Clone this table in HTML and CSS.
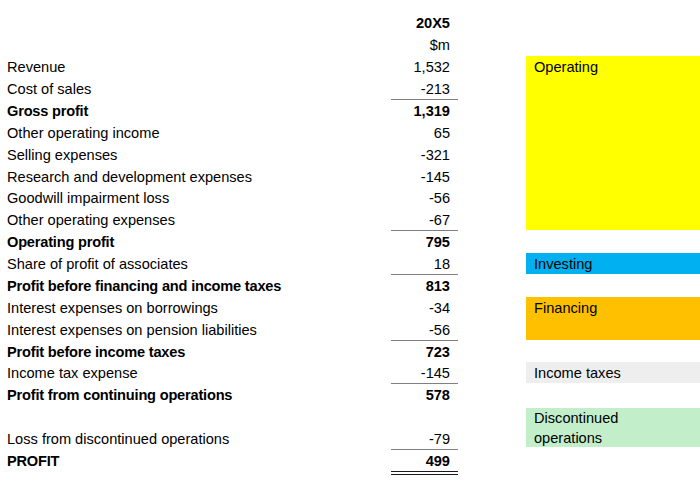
FILE: index.html
```html
<!DOCTYPE html>
<html>
<head>
<meta charset="utf-8">
<link rel="stylesheet" href="styles.css">
</head>
<body>
<div class="sheet">
  <span class="label"></span><span class="num b">20X5</span>
  <span class="label"></span><span class="num">$m</span>
  <span class="label">Revenue</span><span class="num">1,532</span>
  <span class="label">Cost of sales</span><span class="num ul">-213</span>
  <span class="label b">Gross profit</span><span class="num b">1,319</span>
  <span class="label">Other operating income</span><span class="num">65</span>
  <span class="label">Selling expenses</span><span class="num">-321</span>
  <span class="label">Research and development expenses</span><span class="num">-145</span>
  <span class="label">Goodwill impairment loss</span><span class="num">-56</span>
  <span class="label">Other operating expenses</span><span class="num ul">-67</span>
  <span class="label b">Operating profit</span><span class="num b">795</span>
  <span class="label">Share of profit of associates</span><span class="num ul">18</span>
  <span class="label b">Profit before financing and income taxes</span><span class="num b">813</span>
  <span class="label">Interest expenses on borrowings</span><span class="num">-34</span>
  <span class="label">Interest expenses on pension liabilities</span><span class="num ul">-56</span>
  <span class="label b">Profit before income taxes</span><span class="num b">723</span>
  <span class="label">Income tax expense</span><span class="num ul">-145</span>
  <span class="label b">Profit from continuing operations</span><span class="num b">578</span>
  <span class="label"></span><span class="num"></span>
  <span class="label">Loss from discontinued operations</span><span class="num ul">-79</span>
  <span class="label b">PROFIT</span><span class="num b dbl">499</span>

  <div class="box operating">Operating</div>
  <div class="box investing">Investing</div>
  <div class="box financing">Financing</div>
  <div class="box taxes">Income taxes</div>
  <div class="box discontinued">Discontinued<br>operations</div>
</div>
</body>
</html>
```

FILE: styles.css
```css
html, body {
  margin: 0;
  padding: 0;
  background: #ffffff;
}

.sheet {
  display: grid;
  grid-template-columns: 391px 67px 68px 174px;
  grid-auto-rows: 21.88px;
  padding-top: 12.4px;
  padding-bottom: 10px;
  font-family: "Liberation Sans", Arial, sans-serif;
  font-size: 14.6px;
  color: #000;
  width: 700px;
  overflow: hidden;
}

.label {
  grid-column: 1;
  padding-left: 7px;
  padding-top: 1px;
  line-height: 21.5px;
  white-space: nowrap;
}

.num {
  grid-column: 2;
  text-align: right;
  padding-right: 8px;
  padding-top: 1px;
  line-height: 21.5px;
  box-sizing: border-box;
}

.b {
  font-weight: bold;
}

.label.b {
  letter-spacing: -0.2px;
}

.ul {
  border-bottom: 1px solid #7f7f7f;
}

.dbl {
  border-bottom: 1px solid #1a1a1a;
  box-shadow: 0 2px 0 #ffffff, 0 3px 0 #1a1a1a;
}

.box {
  grid-column: 4;
  padding-left: 8px;
  padding-top: 1px;
  line-height: 21.5px;
  margin-bottom: 1px;
}

.operating {
  grid-row: 3 / 11;
  background: #ffff00;
}

.investing {
  grid-row: 12 / 13;
  background: #00b0f0;
}

.financing {
  grid-row: 14 / 16;
  background: #ffc000;
}

.taxes {
  grid-row: 17 / 18;
  background: #eeeeee;
}

.discontinued {
  grid-row: 19 / 21;
  background: #c2efca;
  margin-top: 1.6px;
  margin-bottom: 3px;
  padding-top: 0;
  line-height: 20px;
}
```
